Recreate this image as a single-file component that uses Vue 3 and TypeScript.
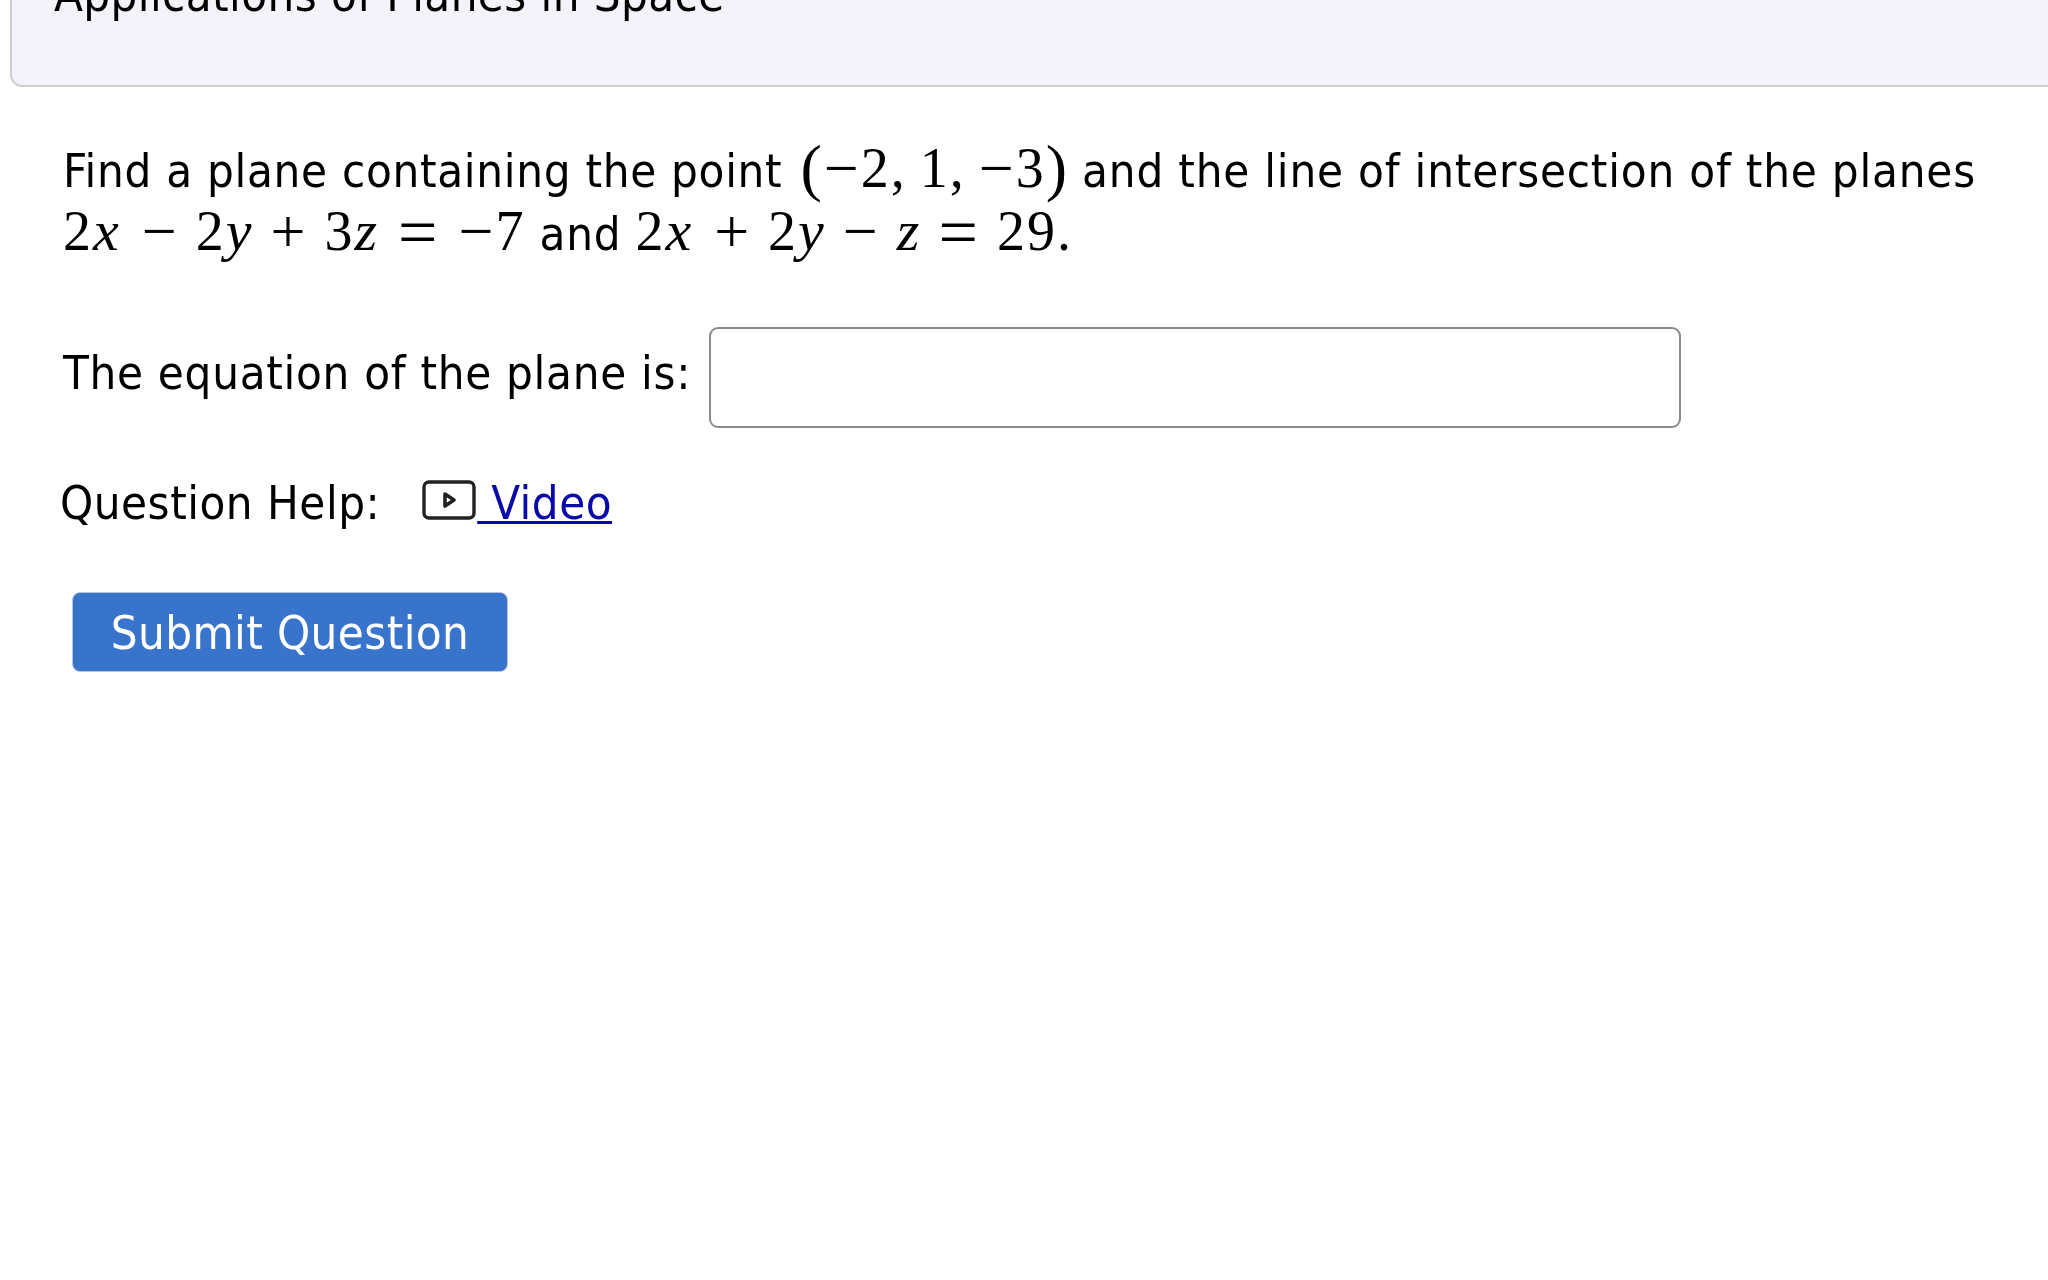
<script setup lang="ts">
const title = 'Applications of Planes in Space'
</script>

<template>
  <div class="page">
    <div class="banner">{{ title }}</div>
    <div class="question">
      <p class="prompt">
        Find a plane containing the point
        <span class="math point"><span class="paren">(</span><span class="op">−</span>2,<span class="thin"></span>1,<span class="thin"></span><span class="op">−</span>3<span class="paren">)</span></span>
        <span class="rest">and the line of intersection of the planes</span><br />
        <span class="math">2<i class="wide">x</i><span class="op bin">−</span>2<i>y</i><span class="op bin">+</span>3<i>z</i><span class="rel">=</span><span class="op">−</span>7</span>
        and
        <span class="math">2<i class="wide">x</i><span class="op bin">+</span>2<i>y</i><span class="op bin">−</span><i>z</i><span class="rel tight">=</span>29.</span>
      </p>
      <div class="answer">
        <span class="answer-label">The equation of the plane is:</span>
        <input class="field" type="text" aria-label="Equation of the plane" />
      </div>
    </div>
    <div class="help">
      <span>Question Help:</span>
      <svg class="icon" viewBox="0 0 54 40" aria-hidden="true">
        <rect x="2" y="2" width="50" height="36" rx="5" fill="none" stroke="#222" stroke-width="3.4" />
        <path d="M23 14 L32 20 L23 26 Z" fill="none" stroke="#222" stroke-width="3.6" stroke-linejoin="round" />
      </svg>
      <a class="link" href="#">&nbsp;Video</a>
    </div>
    <button class="submit" type="button">Submit Question</button>
  </div>
</template>

<style scoped>
.page {
  height: 1280px;
  overflow: hidden;
  background: #fff;
  color: #000;
  font-family: "DejaVu Sans", Lato, sans-serif;
  font-stretch: condensed;
  font-size: 47px;
  letter-spacing: 0.7px;
  line-height: 63px;
  filter: blur(0.5px);
}
.banner {
  box-sizing: border-box;
  height: 119px;
  margin: -32px -40px 0 10px;
  padding: 0 0 0 42px;
  background: #f3f3f9;
  border: 2px solid #cfcfcf;
  border-radius: 12px;
  letter-spacing: 0.4px;
  line-height: 50px;
}
.question {
  padding: 52px 0 0 63px;
}
.prompt {
  margin: 0;
  white-space: nowrap;
}
.math {
  font-family: "Liberation Serif", serif;
  font-stretch: normal;
  font-size: 56px;
  letter-spacing: 2px;
  line-height: 0;
}
.point {
  margin: 0 0 0 4px;
}
.rest {
  margin-left: 13px;
  letter-spacing: 0.8px;
}
.math i {
  font-size: 58px;
}
.math i.wide {
  padding-right: 4px;
}
.op {
  font-size: 62px;
  vertical-align: -2px;
}
.paren {
  font-size: 64px;
  vertical-align: -2px;
}
.thin {
  display: inline-block;
  width: 13px;
}
.bin {
  margin: 0 17px;
}
.rel {
  margin: 0 19px;
  font-size: 70px;
  vertical-align: -6px;
}
.tight {
  margin: 0 17px;
}
.answer {
  display: flex;
  align-items: center;
  gap: 18px;
  margin-top: 62px;
}
.answer-label {
  position: relative;
  top: -5px;
}
.field {
  box-sizing: border-box;
  width: 972px;
  height: 101px;
  border: 2px solid #8a8a8a;
  border-radius: 9px;
  background: #fff;
  outline: none;
}
.help {
  display: flex;
  align-items: center;
  margin-top: 43px;
  padding-left: 60px;
  letter-spacing: 0.5px;
}
.icon {
  width: 54px;
  height: 40px;
  margin-left: 42px;
  margin-bottom: 6px;
}
.link {
  margin-left: 1px;
  color: #0a0aa8;
  text-decoration: underline;
  text-decoration-thickness: 3px;
}
.submit {
  display: block;
  box-sizing: border-box;
  width: 436px;
  height: 80px;
  margin: 58px 0 0 72px;
  border: 1px solid #b9c6da;
  border-radius: 8px;
  background: #3874cb;
  color: #fff;
  font-family: "DejaVu Sans", Lato, sans-serif;
  font-stretch: condensed;
  font-size: 47px;
  letter-spacing: 0.4px;
  line-height: 1;
}
</style>
